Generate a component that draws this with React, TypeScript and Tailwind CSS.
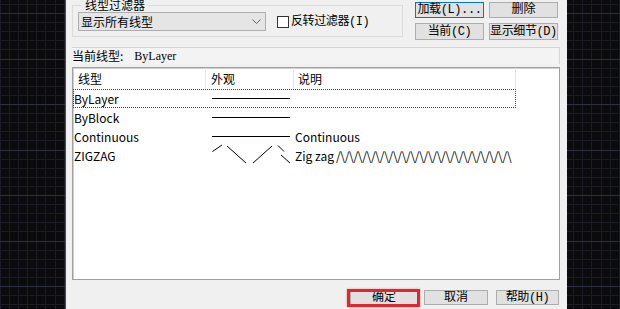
import React from 'react'

const cjk = "font-['Noto_Sans_CJK_SC','Microsoft_YaHei',sans-serif]"
const simsun = "font-['Liberation_Mono','Noto_Sans_CJK_SC',monospace]"

const STEP = 9.1

function CanvasGrid() {
  const xs = Array.from({ length: 70 }, (_, i) => Math.round(9 + (i - 1) * STEP) + 0.5)
  const ys = Array.from({ length: 36 }, (_, i) => ({
    y: Math.round(13 + (i - 2) * STEP) + 0.5,
    major: (i - 2) % 5 === 0,
  }))

  return (
    <svg className="absolute inset-0" width="620" height="309">
      {xs.map((x) => (
        <line key={`v${x}`} x1={x} y1={0} x2={x} y2={309} stroke="#1c1d24" />
      ))}
      {ys.map(({ y, major }) => (
        <line
          key={`h${y}`}
          x1={0}
          y1={y}
          x2={620}
          y2={y}
          stroke={major ? '#2e3040' : '#1c1d24'}
        />
      ))}
    </svg>
  )
}

interface WinButtonProps {
  children: React.ReactNode
  className?: string
}

const WinButton: React.FC<WinButtonProps> = ({ children, className = '' }) => (
  <button
    type="button"
    className={`flex items-center justify-center border bg-[#e1e1e1] text-[12px] leading-none text-black ${simsun} ${className}`}
  >
    {children}
  </button>
)

function ZigzagSample() {
  return (
    <svg width="78" height="19" viewBox="0 0 78 19" className="overflow-visible">
      <g stroke="#000" strokeWidth="1" fill="none">
        <path d="M0.5 5.5 L10 -1" />
        <path d="M15 0 L34 17" />
        <path d="M41 17 L60 0" />
        <path d="M66 -0.5 L72 5.5" />
        <path d="M69 9 L78 17" />
      </g>
    </svg>
  )
}

const WAVE = '/\\'.repeat(20)

const rows = [
  { name: 'ByLayer', line: true, desc: '', wave: false },
  { name: 'ByBlock', line: true, desc: '', wave: false },
  { name: 'Continuous', line: true, desc: 'Continuous', wave: false },
  { name: 'ZIGZAG', line: false, desc: 'Zig zag', wave: true },
]

export default function App() {
  return (
    <div className={`relative h-[309px] w-[620px] overflow-hidden bg-[#0b0b0e] ${cjk}`}>
      <CanvasGrid />

      <div className="relative ml-[65px] flex h-full w-[502px] flex-col border-l border-[#4a4a4a] bg-[#f0f0f0] pl-[6px] text-[12px] text-black">
        {/* filter group + buttons */}
        <div className="flex items-start">
          <fieldset className="-mt-[3px] h-[40px] w-[331px] border border-[#dcdcdc] pl-[5px]">
            <legend className="ml-[4px] px-[3px] text-[12px] leading-[16px]">线型过滤器</legend>
            <div className="-mt-[1px] flex items-center">
              <div className="flex h-[19px] w-[188px] items-center justify-between border border-[#adadad] bg-[#e5e5e5] pl-[2px] pr-[4px]">
                <span className="leading-none">显示所有线型</span>
                <svg width="9" height="6" viewBox="0 0 9 6">
                  <path d="M0.5 0.5 L4.5 4.5 L8.5 0.5" stroke="#606060" fill="none" />
                </svg>
              </div>
              <div className="ml-[11px] flex items-center">
                <span className="h-[12px] w-[12px] border border-[#333] bg-white" />
                <span className={`ml-[2px] leading-none ${simsun} tracking-[-0.4px]`}>反转过滤器(I)</span>
              </div>
            </div>
          </fieldset>

          <div className="ml-[12px] mt-[2px] grid grid-cols-[69px_69px] gap-x-[5px] gap-y-[5px]">
            <WinButton className="h-[16px] border-[#0078d7] tracking-[-0.4px]">加载(L)...</WinButton>
            <WinButton className="h-[16px] border-[#adadad]">删除</WinButton>
            <WinButton className="h-[17px] border-[#adadad] tracking-[-0.4px]">当前(C)</WinButton>
            <WinButton className="h-[17px] border-[#adadad] tracking-[-0.4px]">显示细节(D)</WinButton>
          </div>
        </div>

        {/* current linetype */}
        <div className="mt-[7px] flex h-[17px] w-[488px] items-center border-r border-t border-[#d6d6d6] bg-[#f3f3f3]">
          <span className="leading-none">当前线型:</span>
          <span className="ml-[11px] font-['Liberation_Serif',serif] text-[12px] leading-none">ByLayer</span>
        </div>

        {/* list */}
        <div className="mt-[3px] h-[213px] w-[488px] border border-[#a0a0a0] bg-white shadow-[inset_1px_1px_0_#cfcfcf]">
          <div className="flex h-[21px] items-center">
            <div className="flex h-full w-[133px] items-center border-r border-[#e5e5e5] pl-[5px]">线型</div>
            <div className="flex h-full w-[88px] items-center border-r border-[#e5e5e5] pl-[5px]">外观</div>
            <div className="flex h-full w-[222px] items-center border-r border-[#e5e5e5] pl-[4px]">说明</div>
          </div>
          {rows.map((row, i) => (
            <div
              key={row.name}
              className={`flex h-[19px] w-[443px] items-center border ${
                i === 0 ? 'border-dotted border-[#444]' : 'border-transparent'
              }`}
            >
              <div className="w-[132px] leading-none">{row.name}</div>
              <div className="flex h-full w-[88px] items-center pl-[6px]">
                {row.line ? <div className="h-px w-[78px] bg-black" /> : <ZigzagSample />}
              </div>
              <div className="flex items-center whitespace-nowrap pl-[1px] leading-none">
                <span>{row.desc}</span>
                {row.wave && <span className="ml-[2px] tracking-[-0.32px]">{WAVE}</span>}
              </div>
            </div>
          ))}
        </div>

        {/* bottom buttons */}
        <div className="mt-[10px] flex justify-end pr-[8px]">
          <div className="relative">
            <WinButton className="h-[15px] w-[68px] border-[#adadad]">确定</WinButton>
            <span className="absolute -bottom-[2px] -left-[3px] -right-[2px] -top-[1px] border-[3px] border-[#e3262a] shadow-[0_0_2px_rgba(227,38,42,0.45)]" />
          </div>
          <WinButton className="ml-[6px] h-[15px] w-[64px] border-[#adadad]">取消</WinButton>
          <WinButton className="ml-[8px] h-[15px] w-[63px] border-[#adadad] tracking-[-0.4px]">帮助(H)</WinButton>
        </div>
      </div>
    </div>
  )
}
